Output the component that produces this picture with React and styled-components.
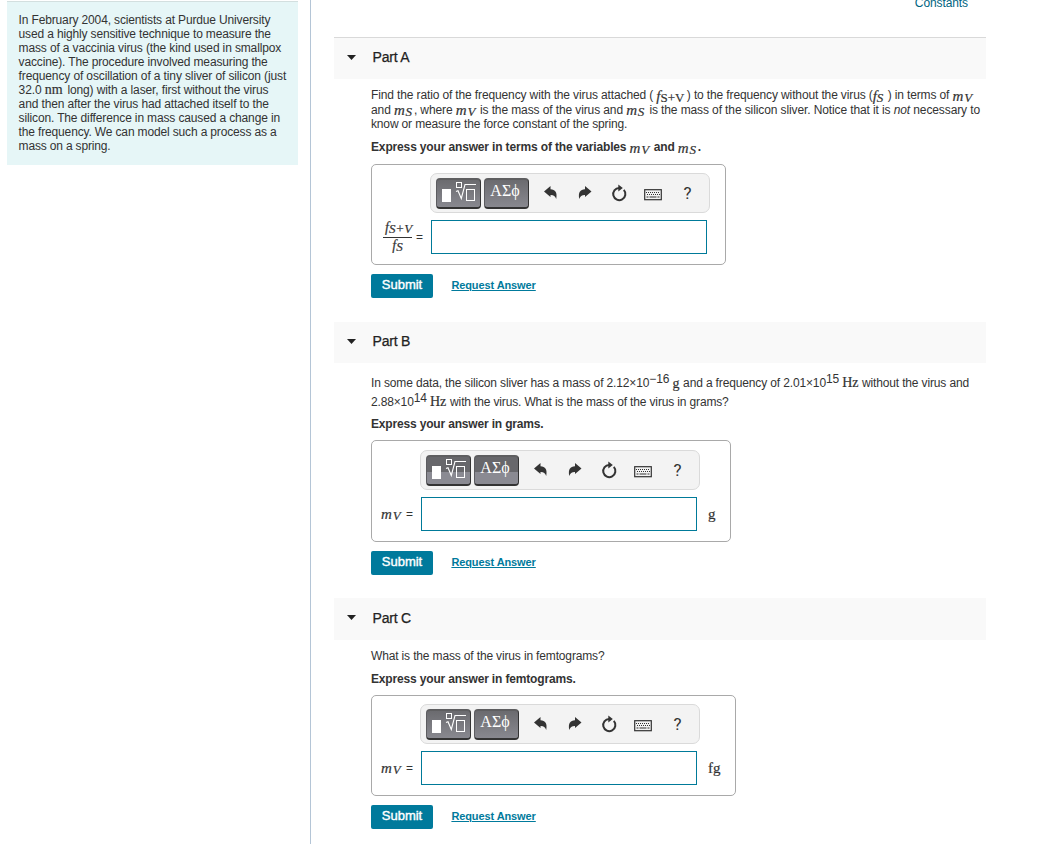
import React from "react";
import styled, { createGlobalStyle } from "styled-components";

const Global = createGlobalStyle`
  body { margin: 0; background: #fff; overflow: hidden; }
  * { box-sizing: border-box; }
`;

const Page = styled.div`
  display: flex;
  width: 1055px;
  height: 844px;
  overflow: hidden;
  font: 12px/14px "Liberation Sans", Arial, sans-serif;
  color: #333;
`;

const Sidebar = styled.aside`
  width: 311px;
  flex: none;
  padding: 1px 12px 0 7px;
  border-right: 1px solid #b4c5d6;
`;

const Intro = styled.div`
  height: 164px;
  padding: 11px 0 0 11.6px;
  background: #e6f6f7;
  border-top: 1px solid #d3dfdf;
`;

const Line = styled.div`
  height: ${(p) => p.$h || 14}px;
  line-height: ${(p) => p.$h || 14}px;
  white-space: nowrap;
  letter-spacing: ${(p) => p.$ls ?? -0.15}px;
`;

const Main = styled.main`
  width: 652px;
  margin-left: 23px;
  flex: none;
`;

const TopRow = styled.div`
  display: flex;
  justify-content: flex-end;
  height: 37px;
  padding-right: 18px;
`;

const Constants = styled.a`
  margin-top: -4px;
  color: #00657f;
  letter-spacing: -0.1px;
`;

const Header = styled.header`
  display: flex;
  align-items: center;
  height: ${(p) => p.$h}px;
  padding: 0 0 3px 13px;
  gap: 16.6px;
  background: #f9f9f9;
  border-top: ${(p) => (p.$ruled ? "1px solid #d9d9d9" : "0")};
  color: #222;
  font-size: 14px;
  line-height: 16px;
  letter-spacing: -0.25px;
  -webkit-text-stroke: 0.25px #222;
`;

const Body = styled.div`
  padding: ${(p) => p.$top}px 0 0 37px;
  height: ${(p) => p.$h}px;
`;

const Instruction = styled(Line)`
  font-weight: bold;
  margin-top: ${(p) => p.$mt}px;
`;

const AnswerBox = styled.div`
  display: flex;
  width: ${(p) => p.$w}px;
  height: ${(p) => p.$h}px;
  margin-top: ${(p) => p.$mt}px;
  padding-top: ${(p) => p.$pt}px;
  border: 1px solid #a9a9a9;
  border-radius: 5px;
`;

const Label = styled.div`
  display: flex;
  align-items: center;
  width: ${(p) => p.$w}px;
  height: 34px;
  margin-top: 47px;
  padding-left: ${(p) => p.$pl}px;
  gap: 4px;
  flex: none;
`;

const Fraction = styled.span`
  display: flex;
  flex-direction: column;
  align-items: center;
  width: 29px;
`;

const Numerator = styled.span`
  width: 29px;
  height: 17px;
  padding-left: 2px;
  line-height: 15px;
  border-bottom: 1px solid #333;
  white-space: nowrap;
`;

const Denominator = styled.span`
  height: 16px;
  line-height: 16px;
  white-space: nowrap;
`;

const Editor = styled.div`
  width: 280px;
  flex: none;
`;

const Toolbar = styled.div`
  display: flex;
  align-items: center;
  width: 280px;
  height: 40px;
  padding: 0 0 0 5px;
  background: #f3f3f3;
  border: 1px solid #dadada;
  border-radius: 7px;
`;

const PaletteButton = styled.button`
  display: flex;
  align-items: center;
  justify-content: center;
  width: 45px;
  height: 31px;
  margin: 1px 3px 0 0;
  padding: ${(p) => (p.$greek ? "0 3px 6px 0" : "0 0 4px")};
  border: 1px solid #5c5c60;
  border-top: 2px solid #5e5e60;
  border-right: 1px solid #333;
  border-bottom: 2px solid #333;
  border-radius: 4px;
  background: ${(p) =>
    p.$split
      ? "linear-gradient(#67676b 0 57%, #8a8a92 57% 100%)"
      : "linear-gradient(#6b6b6f, #88888f)"};
  color: #fff;
  font: 16px/18px "Liberation Serif", serif;
  flex: none;
`;

const ToolIcons = styled.svg`
  display: block;
  width: 142px;
  height: 38px;
  flex: none;
`;

const Help = styled.span`
  width: 20px;
  margin-left: 9.5px;
  font: 17px/20px Roboto, sans-serif;
  color: #333;
`;

const AnswerInput = styled.input`
  display: block;
  width: 276px;
  height: 34px;
  margin: 7px 0 0 1px;
  border: 1px solid #007a99;
  background: #fff;
`;

const Unit = styled.span`
  margin: 56px 0 0 8px;
  height: 16px;
  font: 15px/16px "Liberation Serif", serif;
  -webkit-text-stroke: 0.2px #333;
`;

const Actions = styled.div`
  display: flex;
  margin-top: 9px;
  gap: 18.4px;
`;

const Submit = styled.button`
  width: 62px;
  height: 24px;
  padding: 0 0 2px;
  border: 0;
  border-radius: 2px;
  background: #007a9c;
  color: #fff;
  font: 13px/16px "Liberation Sans", Arial, sans-serif;
  -webkit-text-stroke: 0.4px #fff;
`;

const Request = styled.a`
  margin-top: 4px;
  height: 14px;
  color: #007a9c;
  font-size: 11px;
  font-weight: bold;
  letter-spacing: -0.1px;
  text-decoration: underline;
`;

const MathText = styled.span`
  display: inline-block;
  width: ${(p) => (p.$w ? p.$w + "px" : "auto")};
  height: 14px;
  line-height: 14px;
  vertical-align: ${(p) => p.$drop || 0}px;
  font-family: "Liberation Serif", serif;
  font-style: ${(p) => (p.$roman ? "normal" : "italic")};
  font-weight: normal;
  font-size: ${(p) => p.$size || 15}px;
  letter-spacing: ${(p) => p.$track || 0}px;
  -webkit-text-stroke: 0.2px #333;
`;

const Lower = styled.span`
  font-size: 13px;
  font-style: ${(p) => (p.$roman ? "normal" : "italic")};
  position: relative;
  top: 1px;
`;

const Power = styled.span`
  position: relative;
  top: -4px;
  font-size: 12px;
`;

const Mass = ({ of, w = 21, drop = -2 }) => (
  <MathText $w={w} $drop={drop} $size={15} $track={0.8}>m<Lower>{of}</Lower></MathText>
);

const Freq = ({ of, w, roman, drop = -2, size = 15 }) => (
  <MathText $w={w} $size={size} $drop={drop}>f<Lower $roman={roman}>{of}</Lower></MathText>
);

const Caret = () => (
  <svg width="9" height="5" viewBox="0 0 9 5">
    <path d="M0 0h9L4.5 5z" fill="#222" />
  </svg>
);

const Radical = () => (
  <svg width="35" height="21" viewBox="0 0 35 21" fill="none" stroke="#fff">
    <rect x="1" y="8" width="9" height="13" fill="#fff" stroke="none" />
    <rect x="15.5" y="1.5" width="5" height="5" />
    <path d="M15 10.5l2-.8 3.3 7.8L24 3.5h11" strokeWidth="1.1" />
    <rect x="25.5" y="8.5" width="8" height="11" />
  </svg>
);

const Tools = () => (
  <ToolIcons viewBox="0 0 142 38">
    <g fill="#333">
      <path d="M12 17.5L18.5 12v3.2c4.8.2 7 3.2 5.7 9.8-.9-3.2-2.7-4.2-5.7-4.1V23z" />
      <path d="M59.5 17.5L53 12v3.2c-4.8.2-7 3.2-5.7 9.8.9-3.2 2.7-4.2 5.7-4.1V23z" />
      <path d="M86.3 10.6l4.5 3.3-4.5 3.6z" />
    </g>
    <path d="M87.2 13.9a6.1 6.1 0 1 0 4.6 2" fill="none" stroke="#333" strokeWidth="2" />
    <g fill="none" stroke="#333">
      <rect x="112.7" y="15.7" width="16.6" height="10" strokeWidth="1.2" />
      <path d="M114 18.5h14M115 20.5h13" strokeDasharray="1 1" />
      <path d="M114.5 23h2M117.5 23h7M125.5 23h2" strokeWidth="1.2" />
    </g>
  </ToolIcons>
);

const Answer = ({ label, labelWidth, labelPad, unit, width, height, top, pad, split }) => (
  <>
    <AnswerBox $w={width} $h={height} $mt={top} $pt={pad}>
      <Label $w={labelWidth} $pl={labelPad}>{label}<span>=</span></Label>
      <Editor>
        <Toolbar>
          <PaletteButton $split={split} aria-label="Templates"><Radical /></PaletteButton>
          <PaletteButton $split={split} $greek>ΑΣϕ</PaletteButton>
          <Tools />
          <Help>?</Help>
        </Toolbar>
        <AnswerInput />
      </Editor>
      {unit && <Unit>{unit}</Unit>}
    </AnswerBox>
    <Actions>
      <Submit>Submit</Submit>
      <Request>Request Answer</Request>
    </Actions>
  </>
);

export default function App() {
  return (
    <Page>
      <Global />
      <Sidebar>
        <Intro>
          <Line $ls={-0.145}>In February 2004, scientists at Purdue University</Line>
          <Line>used a highly sensitive technique to measure the</Line>
          <Line $ls={-0.135}>mass of a vaccinia virus (the kind used in smallpox</Line>
          <Line>vaccine). The procedure involved measuring the</Line>
          <Line $ls={-0.125}>frequency of oscillation of a tiny sliver of silicon (just</Line>
          <Line $ls={-0.12}>32.0 <MathText $roman $size={14} $w={19.5}>nm</MathText> long) with a laser, first without the virus</Line>
          <Line $ls={-0.13}>and then after the virus had attached itself to the</Line>
          <Line $ls={-0.14}>silicon. The difference in mass caused a change in</Line>
          <Line $ls={-0.15}>the frequency. We can model such a process as a</Line>
          <Line $ls={-0.17}>mass on a spring.</Line>
        </Intro>
      </Sidebar>
      <Main>
        <TopRow><Constants>Constants</Constants></TopRow>

        <Header $h={42} $ruled><Caret />Part A</Header>
        <Body $top={9} $h={243}>
          <Line $h={15} $ls={-0.13}>
            Find the ratio of the frequency with the virus attached ({" "}
            <Freq of="S+V" roman w={30.5} />) to the frequency without the virus (
            <Freq of="S" w={15} />) in terms of <Mass of="V" />
          </Line>
          <Line $ls={-0.11}>
            and <Mass of="S" w={20} drop={-1} />, where <Mass of="V" drop={-1} /> is the mass of the virus and{" "}
            <Mass of="S" w={20} drop={-1} /> is the mass of the silicon sliver. Notice that it is <i>not</i> necessary to
          </Line>
          <Line $ls={-0.15}>know or measure the force constant of the spring.</Line>
          <Instruction $mt={9} $ls={-0.15}>
            Express your answer in terms of the variables <Mass of="V" /> and <Mass of="S" w={20} />.
          </Instruction>
          <Answer
            label={
              <Fraction>
                <Numerator><Freq of="S+V" size={14} drop={0} /></Numerator>
                <Denominator><Freq of="S" size={14} drop={0} /></Denominator>
              </Fraction>
            }
            labelWidth={58}
            labelPad={11}
            width={355}
            height={101}
            top={10}
            pad={8}
          />
        </Body>

        <Header $h={41}><Caret />Part B</Header>
        <Body $top={11} $h={235}>
          <Line $h={19} $ls={-0.14}>
            In some data, the silicon sliver has a mass of 2.12×10<Power>−16</Power>{" "}
            <MathText $roman $size={14} $w={7.5} $drop={-1}>g</MathText> and a frequency of 2.01×10<Power>15</Power>{" "}
            <MathText $roman $size={14} $w={16.5}>Hz</MathText> without the virus and
          </Line>
          <Line $h={19}>
            2.88×10<Power>14</Power> <MathText $roman $size={14} $w={17}>Hz</MathText> with the virus. What is the mass of the virus in grams?
          </Line>
          <Instruction $mt={5} $ls={-0.17}>Express your answer in grams.</Instruction>
          <Answer
            label={<Mass of="V" />}
            labelWidth={48}
            labelPad={9}
            unit="g"
            width={360}
            height={102}
            top={9}
            pad={9}
            split
          />
        </Body>

        <Header $h={42}><Caret />Part C</Header>
        <Body $top={9} $h={204}>
          <Line>What is the mass of the virus in femtograms?</Line>
          <Instruction $mt={9} $ls={-0.16}>Express your answer in femtograms.</Instruction>
          <Answer
            label={<Mass of="V" />}
            labelWidth={48}
            labelPad={9}
            unit="fg"
            width={365}
            height={101}
            top={9}
            pad={8}
          />
        </Body>
      </Main>
    </Page>
  );
}
